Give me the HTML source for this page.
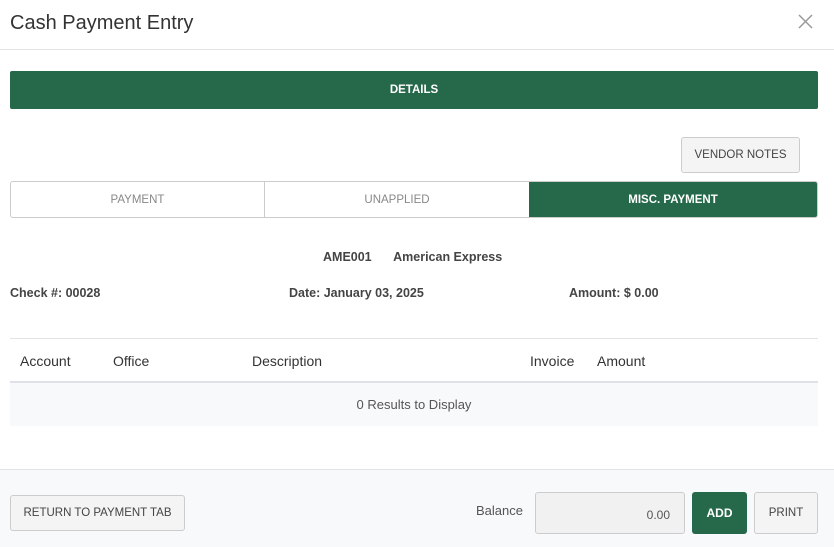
<!DOCTYPE html><html><head><style>
*{box-sizing:border-box;margin:0;padding:0}
body{width:834px;height:547px;background:#fff;font-family:"Liberation Sans",sans-serif;position:relative;overflow:hidden;color:#333}
.a{position:absolute}
.c{display:flex;align-items:center;justify-content:center}
.btn{border:1px solid #ccc;border-radius:3px;background:#f4f4f4;font-size:11.5px;color:#444}
</style></head><body>
<div class="a" style="left:10px;top:12px;font-size:20px;color:#333">Cash Payment Entry</div>
<svg class="a" style="left:798px;top:14px" width="15" height="15"><path d="M1 1L14 14M14 1L1 14" stroke="#999" stroke-width="1.5"/></svg>
<div class="a" style="left:0;top:49px;width:834px;height:1px;background:#e3e3e3"></div>
<div class="a c" style="left:10px;top:71px;width:808px;height:38px;background:#25684a;color:#fff;font-size:11.5px;font-weight:bold;border-radius:2px">DETAILS</div>
<div class="a c btn" style="left:681px;top:137px;width:119px;height:36px">VENDOR NOTES</div>
<div class="a" style="left:10px;top:181px;width:808px;height:37px;border:1px solid #ccc;border-radius:3px;display:flex;overflow:hidden;font-size:11.5px;color:#888">
<div class="c" style="width:254px;border-right:1px solid #ccc">PAYMENT</div>
<div class="c" style="width:264px">UNAPPLIED</div>
<div class="c" style="flex:1;background:#25684a;color:#fff;font-weight:bold">MISC. PAYMENT</div></div>
<div class="a" style="left:323px;top:250px;font-size:12.5px;font-weight:bold;color:#444">AME001 <span style="margin-left:18px">American Express</span></div>
<div class="a" style="left:10px;top:286px;font-size:12.5px;font-weight:bold;color:#444">Check #: 00028</div>
<div class="a" style="left:289px;top:286px;font-size:12.5px;font-weight:bold;color:#444">Date: January 03, 2025</div>
<div class="a" style="left:569px;top:286px;font-size:12.5px;font-weight:bold;color:#444">Amount: $ 0.00</div>
<div class="a" style="left:10px;top:338px;width:808px;height:1px;background:#e3e3e3"></div>
<div class="a" style="top:353px;font-size:14px;color:#333;left:0;width:834px;height:20px">
<span class="a" style="left:20px">Account</span><span class="a" style="left:113px">Office</span><span class="a" style="left:252px">Description</span><span class="a" style="left:530px">Invoice</span><span class="a" style="left:597px">Amount</span></div>
<div class="a" style="left:10px;top:381px;width:808px;height:2px;background:#dee2e6"></div>
<div class="a c" style="left:10px;top:383px;width:808px;height:43px;background:#f8f9fa;font-size:13px;color:#555">0 Results to Display</div>
<div class="a" style="left:0;top:469px;width:834px;height:78px;background:#f8f9fa;border-top:1px solid #e3e3e3"></div>
<div class="a c btn" style="left:10px;top:495px;width:175px;height:36px">RETURN TO PAYMENT TAB</div>
<div class="a" style="left:476px;top:503px;font-size:13px;color:#555">Balance</div>
<div class="a" style="left:535px;top:492px;width:150px;height:42px;border:1px solid #ccc;border-radius:3px;background:#f1f1f1;font-size:12px;color:#555;text-align:right;padding:15px 14px 0 0">0.00</div>
<div class="a c" style="left:692px;top:492px;width:55px;height:42px;background:#25684a;color:#fff;font-size:12px;font-weight:bold;border-radius:3px">ADD</div>
<div class="a c btn" style="left:754px;top:492px;width:64px;height:42px">PRINT</div>
</body></html>
